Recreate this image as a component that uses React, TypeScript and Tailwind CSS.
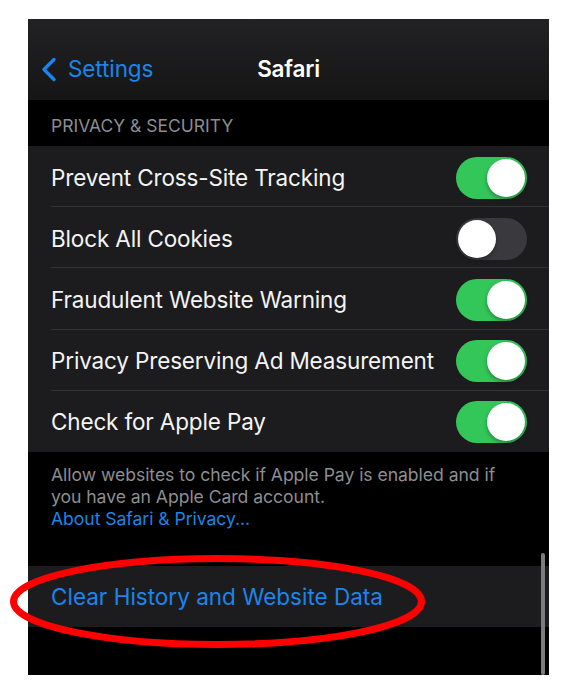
import React from "react";

function Toggle({ on }: { on: boolean }) {
  return (
    <div
      className={
        on
          ? "w-[71px] h-[42px] rounded-full bg-[#33c75a] p-[2px] flex justify-end shrink-0"
          : "w-[71px] h-[42px] rounded-full bg-[#3a3a3e] p-[2px] flex justify-start shrink-0"
      }
    >
      <div className="w-[38px] h-[38px] rounded-full bg-white shadow-[0_2px_4px_rgba(0,0,0,0.35)]" />
    </div>
  );
}

const rows: { label: string; on: boolean }[] = [
  { label: "Prevent Cross-Site Tracking", on: true },
  { label: "Block All Cookies", on: false },
  { label: "Fraudulent Website Warning", on: true },
  { label: "Privacy Preserving Ad Measurement", on: true },
  { label: "Check for Apple Pay", on: true },
];

export default function App() {
  return (
    <div className="relative w-[572px] h-[696px] bg-white pt-[19px] pl-[28px] font-['Inter',sans-serif]">
      <div className="relative w-[521px] h-[656px] bg-black flex flex-col overflow-hidden">
        {/* Nav bar */}
        <div className="relative h-[81px] shrink-0 bg-gradient-to-b from-[#222224] to-[#151516] flex items-end pb-[17px]">
          <div className="flex items-center h-[28px] pl-[13px] text-[#1a85ec]">
            <svg width="16" height="25" viewBox="0 0 16 25" className="mr-[11px]">
              <path d="M13 2.5 L3 12.5 L13 22.5" fill="none" stroke="#1a85ec" strokeWidth="3.4" strokeLinecap="round" strokeLinejoin="round" />
            </svg>
            <span className="text-[22.5px] leading-[28px] tracking-[-0.1px]">Settings</span>
          </div>
          <div className="absolute left-0 right-0 bottom-[17px] h-[28px] flex justify-center">
            <span className="text-[22.5px] leading-[28px] font-semibold text-white tracking-[-0.2px]">Safari</span>
          </div>
        </div>

        {/* Section header */}
        <div className="h-[46px] shrink-0 bg-black flex items-end pb-[9px] pl-[23px]">
          <span className="text-[17.5px] leading-[22px] text-[#8c8c91]">PRIVACY &amp; SECURITY</span>
        </div>

        {/* Rows */}
        <div className="bg-[#1c1c1e] shrink-0">
          {rows.map((r, i) => (
            <div key={r.label} className="relative h-[61.2px] flex items-center pl-[23px] pr-[22px] pt-[2px]">
              <span className="flex-1 text-[22.5px] text-[#f4f4f4] tracking-[-0.15px]">{r.label}</span>
              <Toggle on={r.on} />
              {i < rows.length - 1 && (
                <div className="absolute left-[23px] right-0 bottom-0 h-px bg-[#343436]" />
              )}
            </div>
          ))}
        </div>

        {/* Footer */}
        <div className="shrink-0 pt-[12px] pl-[23px] pr-[20px] text-[17.6px] leading-[22px] text-[#8d8d92] tracking-[-0.05px]">
          Allow websites to check if Apple Pay is enabled and if
          <br />
          you have an Apple Card account.
          <br />
          <span className="text-[#1a85ec]">About Safari &amp; Privacy...</span>
        </div>

        <div className="h-[36px] shrink-0" />

        {/* Clear history */}
        <div className="h-[61px] shrink-0 bg-[#1c1c1e] flex items-center pl-[23px]">
          <span className="text-[22.5px] text-[#1a85ec] tracking-[0px]">Clear History and Website Data</span>
        </div>

        <div className="flex-1 bg-black" />

        {/* Scroll indicator */}
        <div className="absolute right-[4px] top-[534px] bottom-0 w-[4px] rounded-full bg-[#7c7c7e]" />
      </div>

      {/* Red annotation ellipse */}
      <svg className="absolute left-0 top-0 pointer-events-none" width="572" height="696" viewBox="0 0 572 696">
        <ellipse cx="217.5" cy="601.5" rx="204" ry="43" fill="none" stroke="#fe0000" strokeWidth="7" />
      </svg>
    </div>
  );
}
